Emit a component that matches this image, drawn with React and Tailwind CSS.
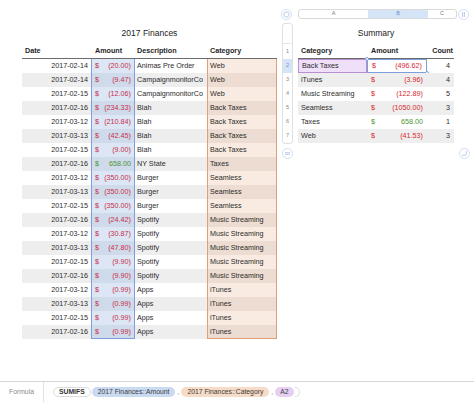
import React from "react";

const rows = [
  ["2017-02-14", "(20.00)", "Animas Pre Order", "Web"],
  ["2017-02-14", "(9.47)", "CampaignmonitorCo", "Web"],
  ["2017-02-15", "(12.06)", "CampaignmonitorCo", "Web"],
  ["2017-02-16", "(234.33)", "Blah", "Back Taxes"],
  ["2017-03-12", "(210.84)", "Blah", "Back Taxes"],
  ["2017-03-13", "(42.45)", "Blah", "Back Taxes"],
  ["2017-02-15", "(9.00)", "Blah", "Back Taxes"],
  ["2017-02-16", "658.00", "NY State", "Taxes"],
  ["2017-03-12", "(350.00)", "Burger", "Seamless"],
  ["2017-03-13", "(350.00)", "Burger", "Seamless"],
  ["2017-02-15", "(350.00)", "Burger", "Seamless"],
  ["2017-02-16", "(24.42)", "Spotify", "Music Streaming"],
  ["2017-03-12", "(30.87)", "Spotify", "Music Streaming"],
  ["2017-03-13", "(47.80)", "Spotify", "Music Streaming"],
  ["2017-02-15", "(9.90)", "Spotify", "Music Streaming"],
  ["2017-02-16", "(9.90)", "Spotify", "Music Streaming"],
  ["2017-03-12", "(0.99)", "Apps", "iTunes"],
  ["2017-03-13", "(0.99)", "Apps", "iTunes"],
  ["2017-02-15", "(0.99)", "Apps", "iTunes"],
  ["2017-02-16", "(0.99)", "Apps", "iTunes"],
];

const summary = [
  ["Back Taxes", "(496.62)", "4"],
  ["iTunes", "(3.96)", "4"],
  ["Music Streaming", "(122.89)", "5"],
  ["Seamless", "(1050.00)", "3"],
  ["Taxes", "658.00", "1"],
  ["Web", "(41.53)", "3"],
];

function Handle({ kind }) {
  return (
    <svg width="11" height="11" viewBox="0 0 11 11" className="shrink-0">
      <circle cx="5.5" cy="5.5" r="5" fill="white" stroke="#c6d5ef" strokeWidth="0.8" />
      {kind === "ring" && <circle cx="5.5" cy="5.5" r="2.6" fill="none" stroke="#a7bde4" strokeWidth="0.8" />}
      {kind === "pause" && (
        <path d="M4.6 3.4 V7.6 M6.4 3.4 V7.6" stroke="#a7bde4" strokeWidth="0.8" strokeLinecap="round" />
      )}
      {kind === "equal" && (
        <path d="M3.4 4.7 H7.6 M3.4 6.3 H7.6" stroke="#a7bde4" strokeWidth="0.8" strokeLinecap="round" />
      )}
      {kind === "corner" && (
        <path d="M7.3 3.3 V5.6 A1.7 1.7 0 0 1 5.6 7.3 H3.3" fill="none" stroke="#a7bde4" strokeWidth="0.8" strokeLinecap="round" />
      )}
    </svg>
  );
}

function FinancesTable() {
  return (
    <div className="w-[255px]">
      <div className="h-[10px] text-center text-[8.5px] leading-[10px] text-[#222]">2017 Finances</div>
      <div className="mt-[6px] grid h-[15px] grid-cols-[69px_44px_72px_70px] items-center border-b border-[#6b6b6b] text-[7.2px] font-bold text-[#1f1f1f]">
        <div className="pl-[3px]">Date</div>
        <div className="pl-[4px]">Amount</div>
        <div className="pl-[2px]">Description</div>
        <div className="pl-[3px]">Category</div>
      </div>
      {rows.map((row, i) => {
        const gray = i % 2 === 1;
        const last = i === rows.length - 1;
        const positive = !row[1].startsWith("(");
        return (
          <div
            key={i}
            className={`grid h-[14px] grid-cols-[69px_44px_72px_70px] text-[7.2px] leading-none text-[#2b2b2b] ${gray ? "bg-[#eeeeee]" : "bg-white"}`}
          >
            <div className="flex items-center justify-end pr-[3px]">{row[0]}</div>
            <div
              className={`flex items-center justify-between border-x border-[#7f9fdb] px-[3px] ${last ? "border-b" : ""} ${gray ? "bg-[#cfdaea]" : "bg-[#dce6f5]"} ${positive ? "text-[#4c9636]" : "text-[#c72f4d]"}`}
            >
              <span>$</span>
              <span>{row[1]}</span>
            </div>
            <div className="flex items-center pl-[2px]">{row[2]}</div>
            <div
              className={`flex items-center border-x border-[#dea07c] pl-[2px] ${last ? "border-b" : ""} ${gray ? "bg-[#ecdcd1]" : "bg-[#f9ebe1]"}`}
            >
              {row[3]}
            </div>
          </div>
        );
      })}
    </div>
  );
}

function SummaryTable() {
  return (
    <div>
      <div className="flex h-[12px] items-center">
        <div className="ml-[3px]">
          <Handle kind="ring" />
        </div>
        <div className="ml-[6px] flex h-[10px] w-[159px] overflow-hidden rounded-[3px] border border-[#d9d9d9] text-[5.5px] leading-none text-[#7a7a7a]">
          <div className="flex w-[69px] items-center justify-center">A</div>
          <div className="flex w-[60px] items-center justify-center bg-[#d6e4f8] text-[#6f8fcf]">B</div>
          <div className="flex flex-1 items-center justify-center">C</div>
        </div>
        <div className="ml-[1px]">
          <Handle kind="pause" />
        </div>
      </div>

      <div className="mt-[3px] flex">
        <div className="ml-[4px] flex w-[11px] flex-col rounded-[3px] border border-[#e0e0e0] text-[5.5px] leading-none text-[#8a8a8a]">
          <div className="h-[20px] border-b border-[#e6e6e6]" />
          <div className="flex h-[15px] items-center justify-center">1</div>
          {summary.map((_, i) => (
            <div
              key={i}
              className={`flex h-[14px] items-center justify-center ${i === 0 ? "bg-[#d6e4f8] text-[#6f8fcf]" : ""}`}
            >
              {i + 2}
            </div>
          ))}
        </div>

        <div className="ml-[5px] w-[156px]">
          <div className="flex h-[21px] items-center justify-center text-[8.5px] text-[#222]">Summary</div>
          <div className="grid h-[15px] grid-cols-[69px_60px_27px] items-center border-b border-[#6b6b6b] text-[7.2px] font-bold text-[#1f1f1f]">
            <div className="pl-[3px]">Category</div>
            <div className="pl-[4px]">Amount</div>
            <div className="text-right pr-[1px]">Count</div>
          </div>
          {summary.map((row, i) => {
            const gray = i % 2 === 1;
            const sel = i === 0;
            const positive = !row[1].startsWith("(");
            return (
              <div
                key={i}
                className={`relative grid h-[14px] grid-cols-[69px_60px_27px] text-[7.2px] leading-none text-[#2b2b2b] ${gray ? "bg-[#eeeeee]" : "bg-white"}`}
              >
                <div
                  className={`flex items-center pl-[3px] ${sel ? "border border-[#b98fd3] bg-[#efdff8] pl-[2px]" : ""}`}
                >
                  {row[0]}
                </div>
                <div
                  className={`relative flex items-center justify-between px-[4px] ${sel ? "border-[1.5px] border-[#7c9fdb]" : ""} ${positive ? "text-[#4c9636]" : "text-[#d8272f]"}`}
                >
                  <span>$</span>
                  <span>{row[1]}</span>
                  {sel && (
                    <>
                      <span className="absolute left-[-3px] top-[-3px] h-[4px] w-[4px] rounded-full border border-[#7c9fdb] bg-white" />
                      <span className="absolute bottom-[-3px] right-[-3px] h-[4px] w-[4px] rounded-full border border-[#7c9fdb] bg-white" />
                    </>
                  )}
                </div>
                <div className="flex items-center justify-end pr-[4px]">{row[2]}</div>
              </div>
            );
          })}
        </div>
      </div>

      <div className="mt-[4px] flex w-[192px] items-center justify-between pl-[3.5px]">
        <Handle kind="equal" />
        <Handle kind="corner" />
      </div>
    </div>
  );
}

export default function App() {
  return (
    <div className="flex h-[402px] w-[474px] flex-col overflow-hidden bg-white font-['Liberation_Sans',Arial,sans-serif]">
      <div className="flex flex-1">
        <div className="w-[278px] pl-[22px] pt-[28px]">
          <FinancesTable />
        </div>
        <div className="pt-[8px]">
          <SummaryTable />
        </div>
      </div>

      <div className="flex h-[21px] shrink-0 items-center border-t border-[#d6d6d6] text-[6.8px] leading-none">
        <div className="flex h-full w-[44px] items-center border-r border-[#e2e2e2] pl-[9px] text-[#8a8a8a]">Formula</div>
        <div className="ml-[9px] flex items-center text-[#3b3b3b]">
          <span className="flex h-[10px] items-center rounded-full border border-[#dcdcdc] px-[5px] font-bold text-[#333]">SUMIFS</span>
          <span className="ml-[1px] flex h-[10px] items-center rounded-full bg-[#cbdaf3] px-[6px]">2017 Finances::Amount</span>
          <span className="mx-[2px] text-[#888]">,</span>
          <span className="flex h-[10px] items-center rounded-full bg-[#f6dcc6] px-[6px]">2017 Finances::Category</span>
          <span className="mx-[2px] text-[#888]">,</span>
          <span className="flex h-[10px] items-center rounded-full bg-[#e6cff2] px-[5px]">A2</span>
          <span className="ml-[1px] h-[10px] w-[5px] rounded-r-full border-y border-r border-[#dcdcdc]" />
        </div>
      </div>
    </div>
  );
}
